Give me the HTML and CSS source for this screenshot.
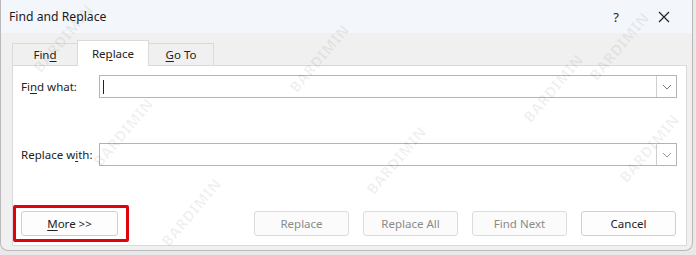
FILE: index.html
```html
<!DOCTYPE html>
<html>
<head>
<meta charset="utf-8">
<link rel="stylesheet" href="styles.css">
</head>
<body>
<div class="window">
  <div class="titlebar">
    <span class="title">Find and Replace</span>
    <div class="title-controls">
      <span class="help">?</span>
      <svg class="close" width="12" height="12" viewBox="0 0 12 12"><path d="M1 1 L11 11 M11 1 L1 11" stroke="#222" stroke-width="1.2" fill="none"/></svg>
    </div>
  </div>
  <div class="body">
    <div class="tabs">
      <div class="tab">Fin<u>d</u></div>
      <div class="tab active">Re<u>p</u>lace</div>
      <div class="tab"><u>G</u>o To</div>
    </div>
    <div class="panel">
      <div class="row">
        <label class="lbl">Fi<u>n</u>d what:</label>
        <div class="combo"><span class="caret"></span><span class="dd"><svg width="10" height="6" viewBox="0 0 10 6"><path d="M1 1 L5 5 L9 1" stroke="#777" stroke-width="1" fill="none"/></svg></span></div>
      </div>
      <div class="row row2">
        <label class="lbl">Replace w<u>i</u>th:</label>
        <div class="combo"><span class="dd"><svg width="10" height="6" viewBox="0 0 10 6"><path d="M1 1 L5 5 L9 1" stroke="#999" stroke-width="1" fill="none"/></svg></span></div>
      </div>
      <div class="buttons">
        <div class="highlight"><button class="btn more"><u>M</u>ore &gt;&gt;</button></div>
        <div class="right-btns">
          <button class="btn disabled">Replace</button>
          <button class="btn disabled">Replace All</button>
          <button class="btn disabled">Find Next</button>
          <button class="btn">Cancel</button>
        </div>
      </div>
    </div>
  </div>
  <div class="wm w1">BARDIMIN</div>
  <div class="wm w2">BARDIMIN</div>
  <div class="wm w3">BARDIMIN</div>
  <div class="wm w4">BARDIMIN</div>
  <div class="wm w5">BARDIMIN</div>
  <div class="wm w6">BARDIMIN</div>
  <div class="wm w7">BARDIMIN</div>
  <div class="wm w8">BARDIMIN</div>
</div>
</body>
</html>
```
FILE: styles.css
```css
html, body {
  margin: 0;
  padding: 0;
  background: #e9e9e9;
  width: 696px;
  height: 255px;
  overflow: hidden;
  font-family: "Noto Sans", "Open Sans", sans-serif;
}
.window {
  position: relative;
  width: 693px;
  height: 251px;
  box-sizing: border-box;
  border: 1px solid #b9b9b9;
  border-top: none;
  border-radius: 0 0 8px 8px;
  background: #f0f0f0;
  overflow: hidden;
}
.titlebar {
  height: 33px;
  background: #f3f6fb;
  display: flex;
  align-items: center;
  justify-content: space-between;
  padding: 0 22px 0 8px;
}
.title {
  font-size: 12.2px;
  color: #1a1a1a;
}
.title-controls {
  display: flex;
  align-items: center;
  gap: 39px;
}
.help {
  font-size: 13px;
  color: #222;
}
.close { display: block; }
.body {
  padding: 7px 5px 0 11px;
}
.tabs {
  display: flex;
  align-items: flex-end;
  height: 25px;
}
.tab {
  height: 22px;
  box-sizing: border-box;
  border: 1px solid #dadada;
  border-bottom: none;
  background: #f0f0f0;
  font-size: 11.5px;
  color: #222;
  display: flex;
  align-items: center;
  justify-content: center;
  width: 66px;
  margin-right: -1px;
}
.tab.active {
  height: 26px;
  background: #fff;
  width: 72px;
  position: relative;
  z-index: 1;
  margin-bottom: -1px;
}
.tab u, .lbl u, .btn u { text-underline-offset: 2px; }
.panel {
  background: #fff;
  border: 1px solid #dadada;
  height: 181px;
  box-sizing: border-box;
  padding: 9px 9px 0 8px;
  display: flex;
  flex-direction: column;
}
.row {
  display: flex;
  align-items: center;
  height: 23px;
}
.row2 { margin-top: 45px; }
.lbl {
  width: 78px;
  font-size: 11.5px;
  color: #222;
}
.combo {
  flex: 1;
  height: 23px;
  box-sizing: border-box;
  border: 1px solid #b4b4b4;
  display: flex;
  align-items: center;
  justify-content: space-between;
  background: #fff;
}
.caret {
  width: 1px;
  height: 14px;
  background: #222;
  margin-left: 3px;
}
.dd {
  margin-left: auto;
  width: 19px;
  height: 21px;
  border-left: 1px solid #cfcfcf;
  display: flex;
  align-items: center;
  justify-content: center;
}
.buttons {
  display: flex;
  align-items: center;
  justify-content: space-between;
  margin-top: 39px;
}
.highlight {
  border: 3px solid #e3000f;
  border-radius: 2px;
  padding: 3px 8px 3px 5px;
  margin-left: -8px;
}
.btn {
  width: 95px;
  height: 25px;
  box-sizing: border-box;
  border: 1px solid #cfcfcf;
  border-radius: 3px;
  background: #fdfdfd;
  font-family: "Noto Sans", "Open Sans", sans-serif;
  font-size: 11.5px;
  color: #222;
  padding: 0;
}
.btn.more { width: 97px; }
.btn.disabled { color: #8a8a8a; background: #fbfbfb; border-color: #dcdcdc; }
.right-btns {
  display: flex;
  gap: 14px;
  margin-right: 1px;
}
.wm {
  position: absolute;
  font-family: "Noto Sans", sans-serif;
  font-weight: bold;
  font-size: 15px;
  color: rgba(0,0,0,0.06);
  transform: translate(-50%, -50%) rotate(-50deg);
  letter-spacing: 0.5px;
  pointer-events: none;
  white-space: nowrap;
}
.w1 { left: 62px; top: 38px; }
.w2 { left: 318px; top: 58px; }
.w3 { left: 552px; top: 88px; }
.w4 { left: 618px; top: 46px; }
.w5 { left: 122px; top: 132px; }
.w6 { left: 395px; top: 160px; }
.w7 { left: 648px; top: 148px; }
.w8 { left: 190px; top: 212px; }
```
